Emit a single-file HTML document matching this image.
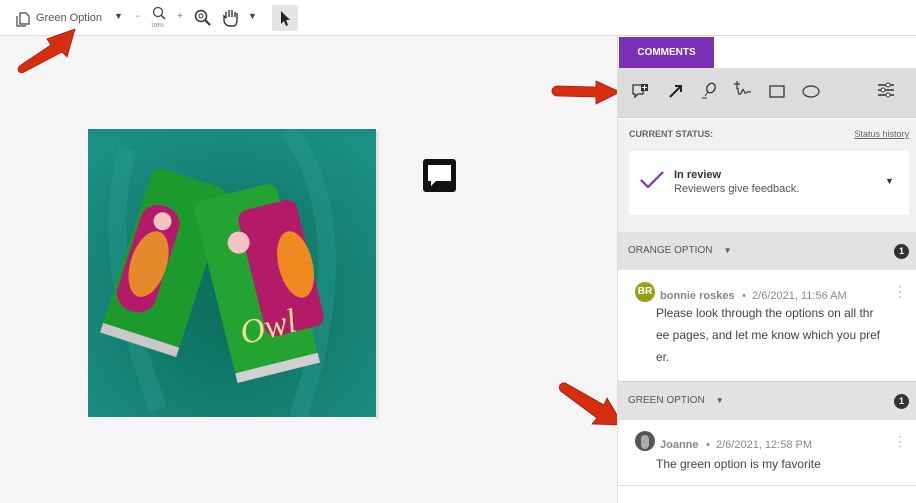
<!DOCTYPE html>
<html><head><style>
*{box-sizing:border-box;margin:0;padding:0}
body{width:916px;height:503px;overflow:hidden;background:#f5f5f5;font-family:"Liberation Sans",sans-serif;position:relative;color:#333}
.abs{position:absolute}
#top{left:0;top:0;width:916px;height:36px;background:#fff;border-bottom:1px solid #ddd}
#panel{left:617px;top:36px;width:299px;height:467px;background:#fff;border-left:1px solid #ddd}
.hdr{position:absolute;left:0;width:299px;background:#e2e2e2;font-size:10px;color:#555;padding-left:10px;line-height:38px}
.badge{position:absolute;right:8px;top:12px;width:15px;height:15px;border-radius:50%;background:#333;color:#fff;font-size:9px;font-weight:bold;text-align:center;line-height:15px}
.name{font-weight:bold;color:#888;font-size:11px}
.date{color:#888;font-size:11px}
.txt{font-size:12px;color:#444;line-height:22px;white-space:nowrap}
</style></head><body>
<div id="top" class="abs">
 <svg class="abs" style="left:16px;top:12px" width="14" height="15" viewBox="0 0 14 15"><path d="M4 1h6l3 3v8H4z M1 4v10h9" fill="none" stroke="#444" stroke-width="1.2"/></svg>
 <div class="abs" style="left:36px;top:12px;font-size:11px;color:#555">Green Option</div>
 <div class="abs" style="left:114px;top:11px;font-size:9px;color:#444">▼</div>
 <div class="abs" style="left:136px;top:11px;font-size:10px;color:#777">-</div>
 <svg class="abs" style="left:152px;top:6px" width="14" height="14"><circle cx="6" cy="6" r="4.5" fill="none" stroke="#444" stroke-width="1.3"/><path d="M9 9l4 4" stroke="#444" stroke-width="1.5"/></svg>
 <div class="abs" style="left:151px;top:23px;font-size:5px;color:#777">100%</div>
 <div class="abs" style="left:177px;top:11px;font-size:10px;color:#777">+</div>
 <svg class="abs" style="left:194px;top:9px" width="17" height="17"><circle cx="7" cy="7" r="5.5" fill="none" stroke="#333" stroke-width="1.5"/><circle cx="7" cy="7" r="2" fill="none" stroke="#333"/><path d="M11 11l5 5" stroke="#333" stroke-width="2"/></svg>
 <svg class="abs" style="left:222px;top:8px" width="18" height="19"><path d="M4 10V4M7 9V2M10 9V2M13 9V4M4 10l-2-2v4c0 4 3 6 6 6h3c3 0 4-3 4-6V5" fill="none" stroke="#333" stroke-width="1.4"/></svg>
 <div class="abs" style="left:248px;top:11px;font-size:9px;color:#444">▼</div>
 <div class="abs" style="left:272px;top:5px;width:26px;height:26px;background:#e4e4e4;border-radius:2px"></div>
 <svg class="abs" style="left:279px;top:10px" width="12" height="17"><path d="M2 1v13l3-3 2 5 2-1-2-5h4z" fill="#222"/></svg>
</div>

<svg class="abs" style="left:88px;top:129px" width="288" height="288" viewBox="0 0 288 288">
 <defs><radialGradient id="bg" cx="50%" cy="60%" r="70%"><stop offset="0" stop-color="#0c6b5a"/><stop offset="1" stop-color="#1a9084"/></radialGradient></defs>
 <rect width="288" height="288" fill="url(#bg)"/>
 <path d="M40 20c-30 100 10 200 30 260M200 0c60 80 40 200 10 288" stroke="#2aa094" stroke-width="18" fill="none" opacity=".35"/>
 <g transform="rotate(18 77 133)"><rect x="37" y="45" width="80" height="170" rx="10" fill="#1d9a2e"/><rect x="40" y="80" width="40" height="110" rx="18" fill="#b51a6a"/><ellipse cx="62" cy="140" rx="18" ry="34" fill="#e48a2a"/><circle cx="62" cy="95" r="9" fill="#f3c3c3"/><rect x="37" y="210" width="80" height="10" fill="#c8c8c8"/></g>
 <g transform="rotate(-14 170 150)"><rect x="125" y="60" width="85" height="180" rx="10" fill="#23a432"/><rect x="165" y="80" width="60" height="130" rx="10" fill="#b51a6a"/><ellipse cx="210" cy="145" rx="17" ry="34" fill="#f08a20"/><circle cx="160" cy="110" r="11" fill="#f3c3c3"/><rect x="125" y="236" width="85" height="10" fill="#d0d0d0"/><text x="140" y="210" font-size="34" fill="#eee08a" font-family="Liberation Serif" font-style="italic">Owl</text></g>
</svg>
<div class="abs" style="left:376px;top:131px;width:3px;height:288px;background:#e3e3e3"></div>
<svg class="abs" style="left:423px;top:159px" width="33" height="33"><rect width="33" height="33" rx="3" fill="#111"/><path d="M5 6h23v16H13l-5 5v-5H5z" fill="#fff"/></svg>

<svg class="abs" style="left:0;top:0" width="916" height="503" pointer-events="none">
 <path d="M24 72c-6 3-8-4-3-7l30-20-4-6 28-10-8 28-5-5z" fill="#d4300f" stroke="#a11" stroke-width=".8"/>
 <path d="M558 86c-8 0-8 10 0 10l38 1v7l24-12-24-11v6z" fill="#d4300f" stroke="#a11" stroke-width=".8"/>
 <path d="M562 392c-6-4-1-12 5-8l37 21 3-7 16 27-31-1 5-6z" fill="#d4300f" stroke="#a11" stroke-width=".8"/>
</svg>

<div id="panel" class="abs">
 <div class="abs" style="left:1px;top:1px;width:95px;height:31px;background:#7b2fb5;color:#fff;font-size:10px;font-weight:bold;text-align:center;line-height:31px">COMMENTS</div>
 <div class="abs" style="left:0;top:32px;width:299px;height:50px;background:#dcdcdc;border-bottom:1px solid #ccc">
  <svg class="abs" style="left:14px;top:15px" width="18" height="18"><path d="M1 2h10v9H6l-3 3v-3H1z" fill="none" stroke="#333" stroke-width="1.3"/><rect x="9" y="1" width="7" height="7" fill="#333"/><path d="M12.5 2v5M10 4.5h5" stroke="#fff"/></svg>
  <svg class="abs" style="left:50px;top:15px" width="16" height="16"><path d="M2 14L13 3M7 3h6v6" stroke="#222" stroke-width="2" fill="none"/></svg>
  <svg class="abs" style="left:83px;top:14px" width="16" height="18"><ellipse cx="10" cy="6" rx="4" ry="5" transform="rotate(30 10 6)" fill="none" stroke="#333" stroke-width="1.3"/><path d="M7 10l-3 4M1 16h5" stroke="#333"/></svg>
  <svg class="abs" style="left:115px;top:12px" width="20" height="20"><path d="M4 1v8M1 4h6M5 8c0 8 2 8 4 3s2 4 4 2 2-1 5-1" stroke="#333" fill="none" stroke-width="1.2"/></svg>
  <svg class="abs" style="left:151px;top:17px" width="16" height="13"><rect x="1" y="1" width="14" height="11" fill="none" stroke="#333" stroke-width="1.3"/></svg>
  <svg class="abs" style="left:184px;top:17px" width="18" height="13"><ellipse cx="9" cy="6.5" rx="8" ry="5.5" fill="none" stroke="#333" stroke-width="1.2"/></svg>
  <svg class="abs" style="left:259px;top:13px" width="18" height="18"><path d="M1 4h16M1 9h16M1 14h16" stroke="#333" stroke-width="1.4"/><circle cx="11" cy="4" r="2" fill="#fff" stroke="#333"/><circle cx="6" cy="9" r="2" fill="#fff" stroke="#333"/><circle cx="11" cy="14" r="2" fill="#fff" stroke="#333"/></svg>
 </div>
 <div class="abs" style="left:0;top:83px;width:299px;height:113px;background:#f1f1f1">
  <div class="abs" style="left:11px;top:10px;font-size:9px;font-weight:bold;color:#666">CURRENT STATUS:</div>
  <div class="abs" style="right:8px;top:10px;font-size:9px;color:#666;text-decoration:underline">Status history</div>
  <div class="abs" style="left:11px;top:32px;width:280px;height:64px;background:#fff;border-radius:2px">
   <svg class="abs" style="left:11px;top:19px" width="24" height="20"><path d="M1 10l7 7L23 2" stroke="#7b2fb5" stroke-width="2.2" fill="none"/></svg>
   <div class="abs" style="left:45px;top:18px;font-size:11px;font-weight:bold;color:#333">In review</div>
   <div class="abs" style="left:45px;top:32px;font-size:11px;color:#555">Reviewers give feedback.</div>
   <div class="abs" style="left:256px;top:25px;font-size:9px;color:#333">▼</div>
  </div>
 </div>
 <div class="hdr" style="top:196px">ORANGE OPTION &nbsp;&nbsp;&nbsp;<span style="font-size:8px">▼</span><div class="badge">1</div></div>
 <div class="abs" style="left:17px;top:246px;width:20px;height:20px;border-radius:50%;background:#9aa016;color:#fff;font-size:10px;font-weight:bold;text-align:center;line-height:20px">BR</div>
 <div class="abs" style="left:42px;top:250px"><span class="name">bonnie roskes</span> <span class="date">&nbsp;•&nbsp; 2/6/2021, 11:56 AM</span></div>
 <div class="abs" style="left:280px;top:248px;color:#888;font-size:12px;line-height:5px">·<br>·<br>·</div>
 <div class="abs txt" style="left:38px;top:266px">Please look through the options on all thr<br>ee pages, and let me know which you pref<br>er.</div>
 <div class="hdr" style="top:345px;border-top:1px solid #d0d0d0">GREEN OPTION &nbsp;&nbsp;&nbsp;<span style="font-size:8px">▼</span><div class="badge">1</div></div>
 <div class="abs" style="left:17px;top:395px;width:20px;height:20px;border-radius:50%;background:#555"><div style="margin:4px 6px;width:8px;height:14px;border-radius:4px;background:#aaa"></div></div>
 <div class="abs" style="left:42px;top:399px"><span class="name">Joanne</span> <span class="date">&nbsp;•&nbsp; 2/6/2021, 12:58 PM</span></div>
 <div class="abs" style="left:280px;top:398px;color:#888;font-size:12px;line-height:5px">·<br>·<br>·</div>
 <div class="abs txt" style="left:38px;top:417px">The green option is my favorite</div>
 <div class="abs" style="left:0;top:449px;width:299px;height:1px;background:#e0e0e0"></div>
</div>
</body></html>
